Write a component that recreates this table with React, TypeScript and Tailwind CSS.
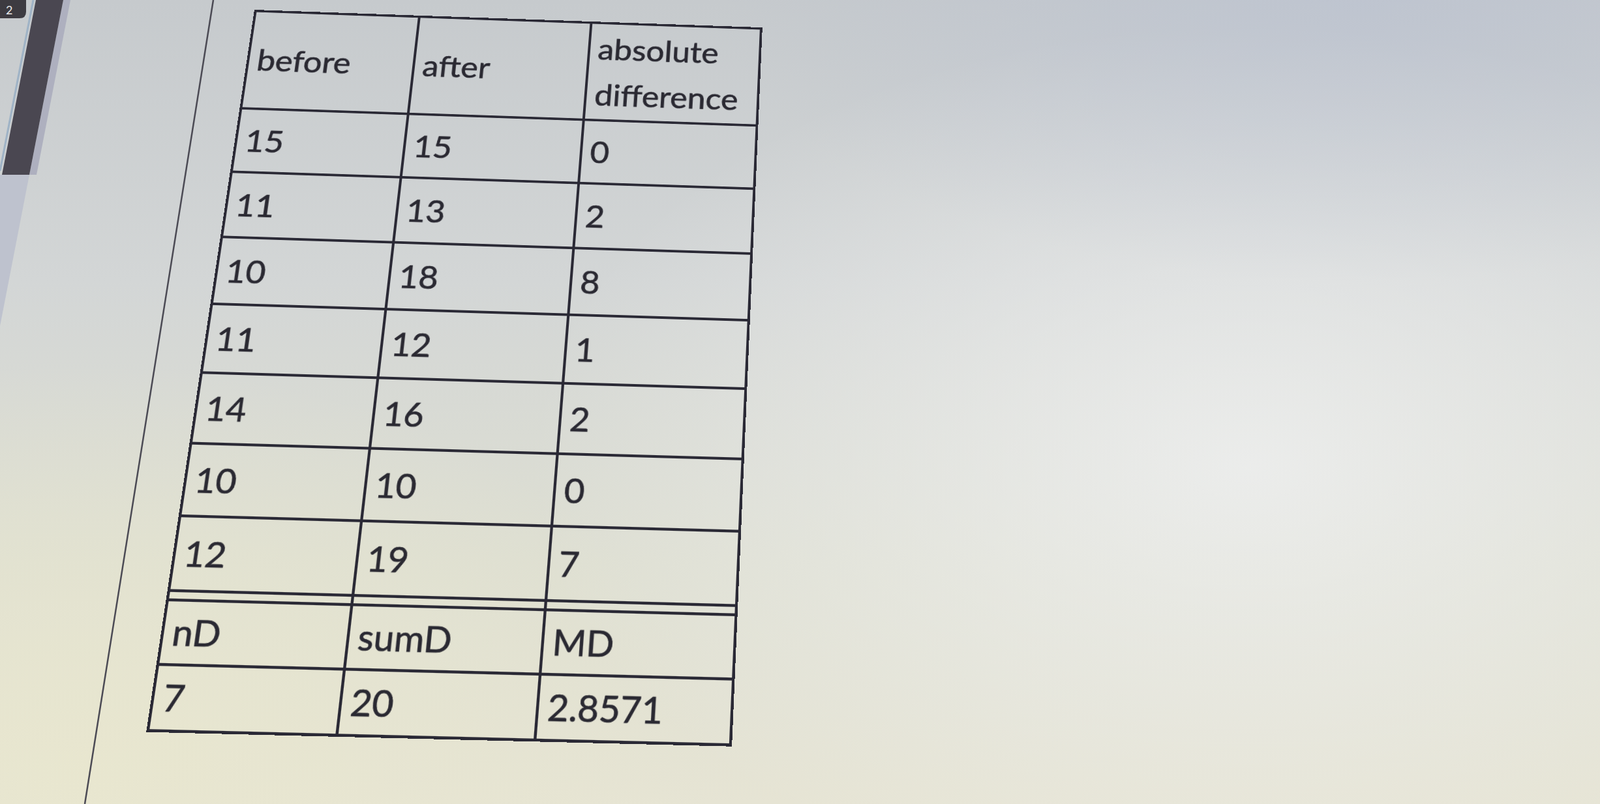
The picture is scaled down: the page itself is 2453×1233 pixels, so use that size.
const W = 800;
const H = 1100;

// where the four corners of the table land in the photo, relative to its top-left corner
const corners: [number, number][] = [
  [0, 0],
  [775, 27],
  [728, 1124],
  [-165, 1102],
];

// rectangle -> quad projective matrix, so the flat table sits like the photographed one
function quadMatrix(w: number, h: number, p: [number, number][]) {
  const [[x0, y0], [x1, y1], [x2, y2], [x3, y3]] = p;
  const dx1 = x1 - x2, dx2 = x3 - x2, dx3 = x0 - x1 + x2 - x3;
  const dy1 = y1 - y2, dy2 = y3 - y2, dy3 = y0 - y1 + y2 - y3;
  const den = dx1 * dy2 - dx2 * dy1;
  const g = (dx3 * dy2 - dx2 * dy3) / den;
  const k = (dx1 * dy3 - dx3 * dy1) / den;
  const a = x1 - x0 + g * x1;
  const b = x3 - x0 + k * x3;
  const d = y1 - y0 + g * y1;
  const e = y3 - y0 + k * y3;
  const m = [a / w, d / w, 0, g / w, b / h, e / h, 0, k / h, 0, 0, 1, 0, x0, y0, 0, 1];
  return `matrix3d(${m.join(",")})`;
}

const rows = [
  ["15", "15", "0"],
  ["11", "13", "2"],
  ["10", "18", "8"],
  ["11", "12", "1"],
  ["14", "16", "2"],
  ["10", "10", "0"],
  ["12", "19", "7"],
];

const cell = "border-[4px] border-[#2a2935] px-3 align-middle";

function Backdrop() {
  return (
    <svg className="col-start-1 row-start-1 w-[2453px] h-[1233px]" viewBox="0 0 2453 1233">
      {/* window edge on the far left */}
      <polygon points="0,268 45,268 0,500" fill="#bec2ce" />
      <polygon points="97,0 108,0 56,268 45,268" fill="#aeb0bf" />
      <polygon points="55,0 97,0 45,268 3,268" fill="#4a4751" />
      <line x1="51" y1="0" x2="0" y2="262" stroke="#9fb3c6" strokeWidth="3" />
      <path d="M0 0 H40 V18 Q40 28 30 28 H0 Z" fill="#3d3b41" />
      <text x="9" y="22" fontSize="18" fill="#e9e9ea" fontFamily="Lato, sans-serif">
        2
      </text>
      {/* sheet border */}
      <line x1="327" y1="0" x2="130" y2="1233" stroke="#4b4a54" strokeWidth="2.5" />
    </svg>
  );
}

export default function App() {
  return (
    <div className="grid w-[2453px] h-[1233px] overflow-hidden [background-image:radial-gradient(ellipse_40%_35%_at_85%_0%,rgba(184,192,210,0.55),transparent),radial-gradient(ellipse_45%_55%_at_78%_58%,rgba(238,239,239,0.85),transparent),radial-gradient(ellipse_40%_50%_at_5%_95%,rgba(233,231,206,0.8),transparent),linear-gradient(180deg,#c6cacd_0%,#d3d6d6_35%,#dedfd2_70%,#e6e4d4_100%)]">
      <Backdrop />

      <div className="col-start-1 row-start-1 self-start justify-self-start ml-[390px] mt-[15px]">
        <table
          className="origin-top-left border-collapse table-fixed w-[800px] text-[51px] text-[#2a2932] font-[Lato,sans-serif] [-webkit-text-stroke:0.7px_#2a2932]"
          style={{ transform: quadMatrix(W, H, corners) }}
        >
          <colgroup>
            <col className="w-[258px]" />
            <col className="w-[272px]" />
            <col className="w-[270px]" />
          </colgroup>
          <tbody>
            <tr className="h-[168px] leading-[1.55]">
              <td className={cell}>before</td>
              <td className={cell}>after</td>
              <td className={cell}>absolute difference</td>
            </tr>
            {rows.map((r, i) => (
              <tr key={i} className="h-[106px]">
                {r.map((v, j) => (
                  <td key={j} className={cell}>
                    {v}
                  </td>
                ))}
              </tr>
            ))}
            <tr className="h-[13px]">
              <td className={cell}></td>
              <td className={cell}></td>
              <td className={cell}></td>
            </tr>
            <tr className="h-[89px]">
              <td className={cell}>nD</td>
              <td className={cell}>sumD</td>
              <td className={cell}>MD</td>
            </tr>
            <tr className="h-[89px]">
              <td className={cell}>7</td>
              <td className={cell}>20</td>
              <td className={cell}>2.8571</td>
            </tr>
          </tbody>
        </table>
      </div>
    </div>
  );
}
